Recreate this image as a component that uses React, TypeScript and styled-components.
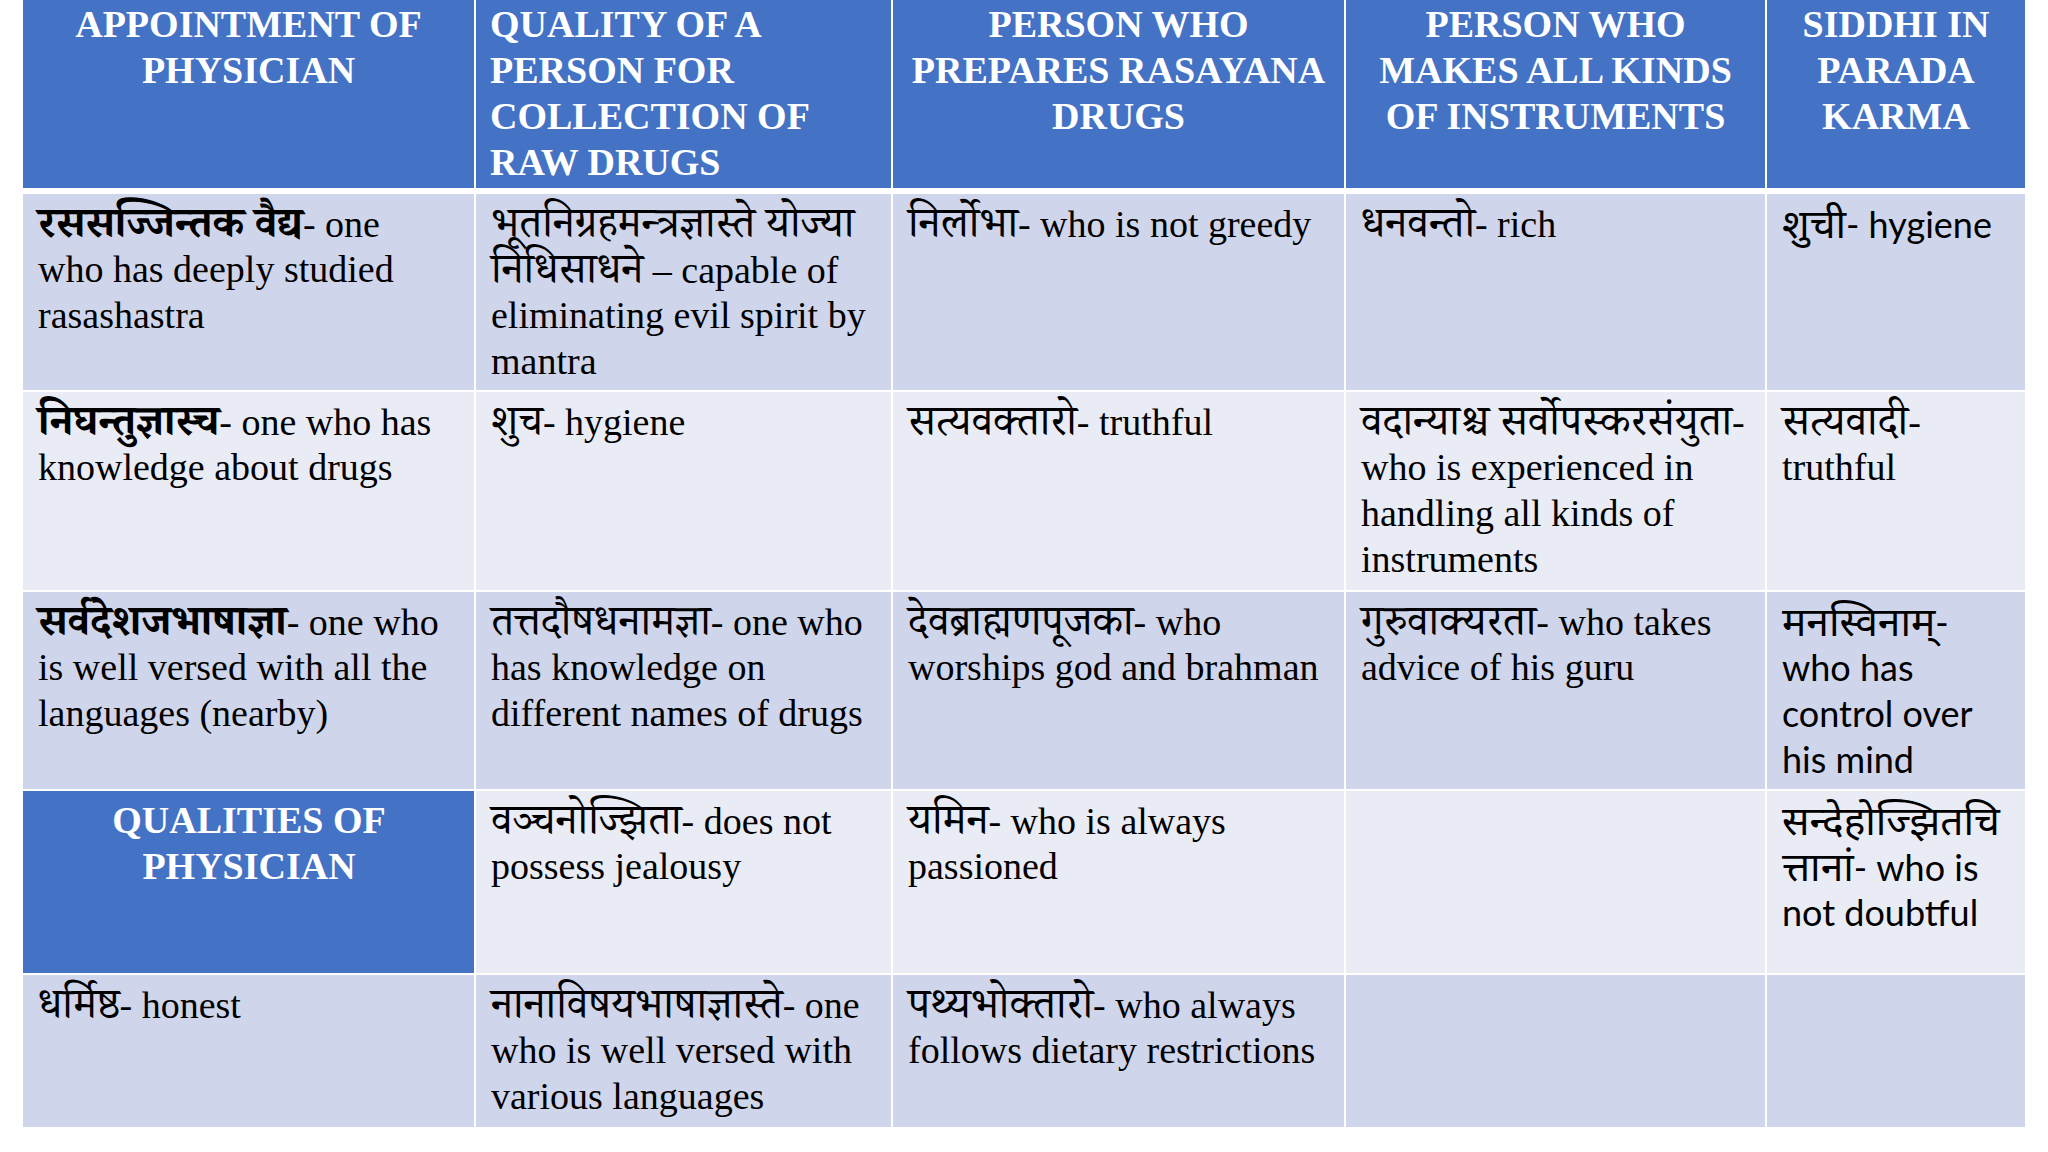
import React from "react";
import styled, { createGlobalStyle } from "styled-components";

const Global = createGlobalStyle`
  html, body { margin: 0; padding: 0; background: #ffffff; }
  #root { width: 2048px; height: 1152px; background: #ffffff; }
`;

const SERIF = `"Liberation Serif", "Noto Serif Devanagari", "Noto Sans Devanagari", "Lohit Devanagari", "FreeSerif", serif`;
const SANS = `Lato, "Noto Sans Devanagari", "Noto Sans", "Lohit Devanagari", sans-serif`;

const Page = styled.div`
  padding-left: 23px;
`;

const Table = styled.div`
  display: flex;
  flex-direction: column;
  gap: 2px;
  width: 2002px;
`;

const Row = styled.div<{ $h: number; $header?: boolean }>`
  display: grid;
  grid-template-columns: 451px 415px 451px 419px 258px;
  column-gap: 2px;
  height: ${(p) => p.$h}px;
  margin-bottom: ${(p) => (p.$header ? 4 : 0)}px;
`;

type Tone = "head" | "dark" | "light";

const bg: Record<Tone, string> = {
  head: "#4472c4",
  dark: "#cfd5ea",
  light: "#e9ebf5",
};

const Cell = styled.div<{
  $tone: Tone;
  $center?: boolean;
  $sans?: boolean;
  $body?: boolean;
}>`
  background: ${(p) => bg[p.$tone]};
  color: ${(p) => (p.$tone === "head" ? "#ffffff" : "#000000")};
  font-family: ${(p) => (p.$sans ? SANS : SERIF)};
  font-weight: ${(p) => (p.$tone === "head" ? 700 : 400)};
  font-size: ${(p) => (p.$sans ? 36 : 38)}px;
  line-height: 46px;
  text-align: ${(p) => (p.$center ? "center" : "left")};
  padding: ${(p) => (p.$tone === "head" && !p.$body ? "1px 14px 0" : "6px 14px 0 15px")};
  box-sizing: border-box;
  overflow: hidden;
`;

const Line = styled.span`
  display: block;
  white-space: nowrap;
  height: 46px;
`;

const Term = styled.span<{ $bold?: boolean }>`
  font-weight: ${(p) => (p.$bold ? 700 : 400)};
  font-size: 1.13em;
`;

export default function App() {
  return (
    <>
      <Global />
      <Page>
        <Table>
          <Row $h={188} $header>
            <Cell $tone="head" $center>
              <Line>APPOINTMENT OF</Line>
              <Line>PHYSICIAN</Line>
            </Cell>
            <Cell $tone="head">
              <Line>QUALITY OF A</Line>
              <Line>PERSON FOR</Line>
              <Line>COLLECTION OF</Line>
              <Line>RAW DRUGS</Line>
            </Cell>
            <Cell $tone="head" $center>
              <Line>PERSON WHO</Line>
              <Line>PREPARES RASAYANA</Line>
              <Line>DRUGS</Line>
            </Cell>
            <Cell $tone="head" $center>
              <Line>PERSON WHO</Line>
              <Line>MAKES ALL KINDS</Line>
              <Line>OF INSTRUMENTS</Line>
            </Cell>
            <Cell $tone="head" $center>
              <Line>SIDDHI IN</Line>
              <Line>PARADA</Line>
              <Line>KARMA</Line>
            </Cell>
          </Row>

          <Row $h={196}>
            <Cell $tone="dark">
              <Line>
                <Term $bold>रससज्जिन्तक वैद्य</Term>- one
              </Line>
              <Line>who has deeply studied</Line>
              <Line>rasashastra</Line>
            </Cell>
            <Cell $tone="dark">
              <Line>
                <Term>भूतनिग्रहमन्त्रज्ञास्ते योज्या</Term>
              </Line>
              <Line>
                <Term>निधिसाधने</Term> – capable of
              </Line>
              <Line>eliminating evil spirit by</Line>
              <Line>mantra</Line>
            </Cell>
            <Cell $tone="dark">
              <Line>
                <Term>निर्लोभा</Term>- who is not greedy
              </Line>
            </Cell>
            <Cell $tone="dark">
              <Line>
                <Term>धनवन्तो</Term>- rich
              </Line>
            </Cell>
            <Cell $tone="dark" $sans>
              <Line>
                <Term>शुची</Term>- hygiene
              </Line>
            </Cell>
          </Row>

          <Row $h={198}>
            <Cell $tone="light">
              <Line>
                <Term $bold>निघन्तुज्ञास्च</Term>- one who has
              </Line>
              <Line>knowledge about drugs</Line>
            </Cell>
            <Cell $tone="light">
              <Line>
                <Term>शुच</Term>- hygiene
              </Line>
            </Cell>
            <Cell $tone="light">
              <Line>
                <Term>सत्यवक्तारो</Term>- truthful
              </Line>
            </Cell>
            <Cell $tone="light">
              <Line>
                <Term>वदान्याश्च सर्वोपस्करसंयुता</Term>-
              </Line>
              <Line>who is experienced in</Line>
              <Line>handling all kinds of</Line>
              <Line>instruments</Line>
            </Cell>
            <Cell $tone="light">
              <Line>
                <Term>सत्यवादी</Term>-
              </Line>
              <Line>truthful</Line>
            </Cell>
          </Row>

          <Row $h={197}>
            <Cell $tone="dark">
              <Line>
                <Term $bold>सर्वदेशजभाषाज्ञा</Term>- one who
              </Line>
              <Line>is well versed with all the</Line>
              <Line>languages (nearby)</Line>
            </Cell>
            <Cell $tone="dark">
              <Line>
                <Term>तत्तदौषधनामज्ञा</Term>- one who
              </Line>
              <Line>has knowledge on</Line>
              <Line>different names of drugs</Line>
            </Cell>
            <Cell $tone="dark">
              <Line>
                <Term>देवब्राह्मणपूजका</Term>- who
              </Line>
              <Line>worships god and brahman</Line>
            </Cell>
            <Cell $tone="dark">
              <Line>
                <Term>गुरुवाक्यरता</Term>- who takes
              </Line>
              <Line>advice of his guru</Line>
            </Cell>
            <Cell $tone="dark" $sans>
              <Line>
                <Term>मनस्विनाम्</Term>-
              </Line>
              <Line>who has</Line>
              <Line>control over</Line>
              <Line>his mind</Line>
            </Cell>
          </Row>

          <Row $h={182}>
            <Cell $tone="head" $center $body>
              <Line>QUALITIES OF</Line>
              <Line>PHYSICIAN</Line>
            </Cell>
            <Cell $tone="light">
              <Line>
                <Term>वञ्चनोज्झिता</Term>- does not
              </Line>
              <Line>possess jealousy</Line>
            </Cell>
            <Cell $tone="light">
              <Line>
                <Term>यमिन</Term>- who is always
              </Line>
              <Line>passioned</Line>
            </Cell>
            <Cell $tone="light" />
            <Cell $tone="light" $sans>
              <Line>
                <Term>सन्देहोज्झितचि</Term>
              </Line>
              <Line>
                <Term>त्तानां</Term>- who is
              </Line>
              <Line>not doubtful</Line>
            </Cell>
          </Row>

          <Row $h={152}>
            <Cell $tone="dark">
              <Line>
                <Term>धर्मिष्ठ</Term>- honest
              </Line>
            </Cell>
            <Cell $tone="dark">
              <Line>
                <Term>नानाविषयभाषाज्ञास्ते</Term>- one
              </Line>
              <Line>who is well versed with</Line>
              <Line>various languages</Line>
            </Cell>
            <Cell $tone="dark">
              <Line>
                <Term>पथ्यभोक्तारो</Term>- who always
              </Line>
              <Line>follows dietary restrictions</Line>
            </Cell>
            <Cell $tone="dark" />
            <Cell $tone="dark" />
          </Row>
        </Table>
      </Page>
    </>
  );
}
